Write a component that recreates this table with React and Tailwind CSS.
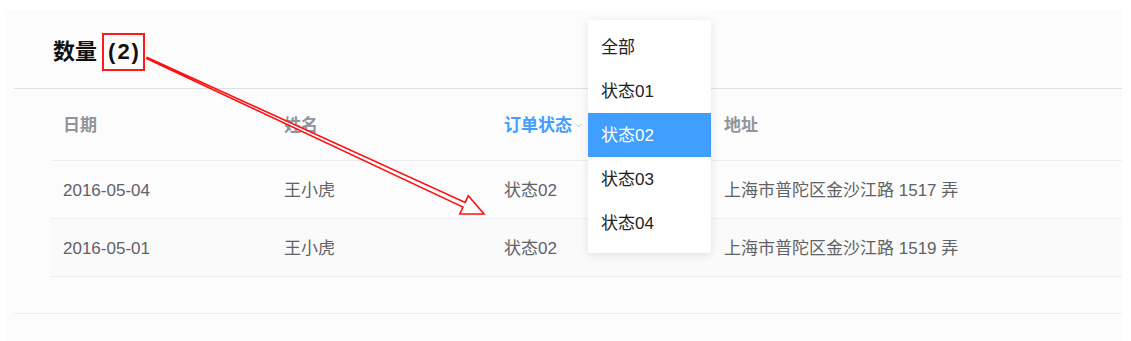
import { ChevronDown } from 'lucide-react';

const rows = [
  { date: '2016-05-04', name: '王小虎', status: '状态02', addr: '上海市普陀区金沙江路 1517 弄' },
  { date: '2016-05-01', name: '王小虎', status: '状态02', addr: '上海市普陀区金沙江路 1519 弄' },
];

const options = ['全部', '状态01', '状态02', '状态03', '状态04'];

const font = { fontFamily: '"Liberation Sans", "Noto Sans CJK SC", sans-serif' };

export default function App() {
  const L = 371.4;
  return (
    <div className="relative h-[341px] w-[1131px] overflow-hidden bg-white pt-[10px] pl-[5px] pr-[9px]" style={font}>
      <div className="h-full bg-[#fcfcfd] pl-[9px]">
        <div className="flex h-[79px] items-center border-b border-[#dcdfe6] pl-[39px] pt-[5px]">
          <span className="text-[22px] font-bold text-[#111]">数量</span>
          <span className="ml-[5px] flex h-[38px] w-[43px] items-center justify-center border-2 border-[#ff1a1a] pl-[2px] text-[22px] font-bold tracking-[2px] text-[#111]">(2)</span>
        </div>

        <div className="pl-[37px]">
          <div className="flex h-[72px] items-center border-b border-[#ebeef5] pt-[2px] text-[17px] font-bold text-[#909399]">
            <div className="w-[221px] pl-[12px]">日期</div>
            <div className="w-[220px] pl-[12px]">姓名</div>
            <div className="flex w-[220px] items-center gap-[1px] pl-[12px] text-[#409eff]">
              订单状态
              <ChevronDown className="h-[11px] w-[11px] text-[#c0c4cc]" strokeWidth={2} />
            </div>
            <div className="pl-[12px]">地址</div>
          </div>
          {rows.map((r, i) => (
            <div
              key={r.addr}
              className={`flex h-[58px] items-center border-b border-[#ebeef5] pt-[2px] text-[17px] text-[#606266] ${i === 1 ? 'bg-[#fafafa]' : ''}`}
            >
              <div className="w-[221px] pl-[12px]">{r.date}</div>
              <div className="w-[220px] pl-[12px]">{r.name}</div>
              <div className="w-[220px] pl-[12px]">{r.status}</div>
              <div className="pl-[12px]">{r.addr}</div>
            </div>
          ))}
        </div>
        <div className="mt-[36px] border-t border-[#ebeef5]" />
      </div>

      {/* filter dropdown */}
      <div className="absolute left-[588px] top-[20px] h-[233px] w-[123px] rounded-[2px] bg-white pt-[5px] shadow-[0_2px_10px_rgba(0,0,0,0.1)]">
        {options.map((o) => (
          <div
            key={o}
            className={`flex h-[44px] items-center pl-[13px] pt-[2px] text-[17px] ${o === '状态02' ? 'bg-[#409eff] text-white' : 'text-[#222]'}`}
          >
            {o}
          </div>
        ))}
      </div>

      {/* annotation arrow */}
      <svg className="pointer-events-none absolute left-0 top-0" width="1131" height="341">
        <g transform="translate(147 58) rotate(24.84)">
          <polygon
            points={`0,-0.6 ${L - 22},-2.6 ${L - 22},-10 ${L},0 ${L - 22},10 ${L - 22},2.6 0,0.6`}
            fill="white"
            stroke="#ff1010"
            strokeWidth="1.6"
            strokeLinejoin="miter"
          />
        </g>
      </svg>
    </div>
  );
}
